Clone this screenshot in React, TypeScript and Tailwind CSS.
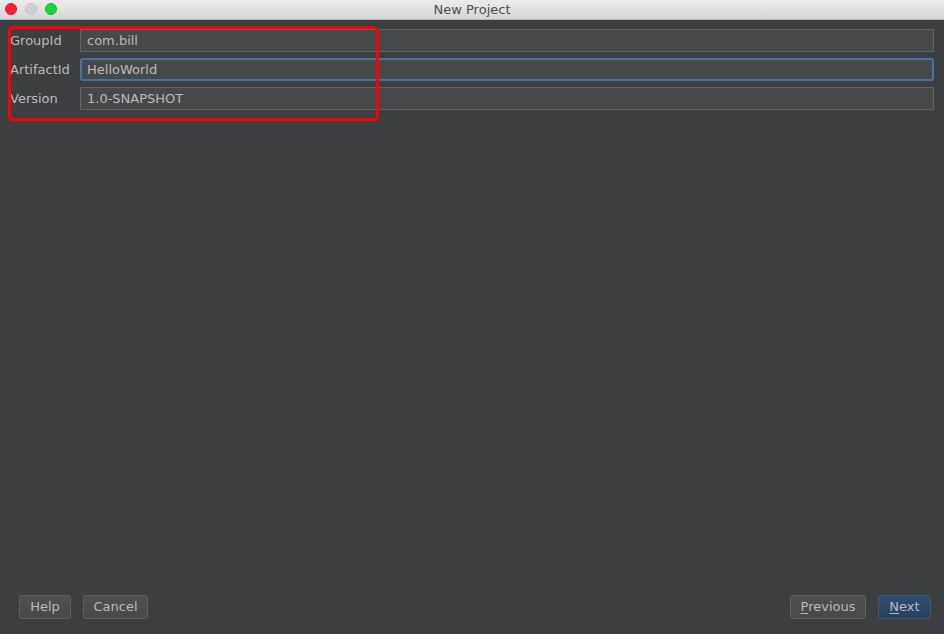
export default function App() {
  const fields = [
    { label: 'GroupId', value: 'com.bill', focused: false },
    { label: 'ArtifactId', value: 'HelloWorld', focused: true },
    { label: 'Version', value: '1.0-SNAPSHOT', focused: false },
  ]

  return (
    <div
      className="w-[944px] h-[634px] flex flex-col bg-[#3c3f41] text-[13px] text-[#bbbbbb] overflow-hidden"
      style={{ fontFamily: '"DejaVu Sans", "Liberation Sans", sans-serif' }}
    >
      {/* Title bar */}
      <div className="relative h-[20px] flex items-center justify-center bg-gradient-to-b from-[#ececec] to-[#d6d6d6] border-b border-[#b4b4b4]">
        <div className="absolute left-[5px] top-[3px] flex gap-[8px]">
          <span className="w-[12px] h-[12px] rounded-full bg-[#fc1e33] border border-[#e0162a]" />
          <span className="w-[12px] h-[12px] rounded-full bg-[#d0d0d0] border border-[#c2c2c2]" />
          <span className="w-[12px] h-[12px] rounded-full bg-[#1bd23c] border border-[#14b630]" />
        </div>
        <span className="text-[13px] text-[#4d4d4d] leading-none">New Project</span>
      </div>

      {/* Form */}
      <div className="relative flex flex-col gap-[6px] pt-[9px] pl-[10px] pr-[10px]">
        {fields.map((f) => (
          <div key={f.label} className="flex items-center h-[23px]">
            <span className="w-[70px] shrink-0 pt-[1px]">{f.label}</span>
            <div
              className={
                f.focused
                  ? 'flex-1 h-[23px] flex items-center px-[5px] pt-[1px] bg-[#45494a] border-2 border-[#4a729e] rounded-[3px]'
                  : 'flex-1 h-[23px] flex items-center px-[6px] pt-[1px] bg-[#45494a] border border-[#646464]'
              }
            >
              {f.value}
            </div>
          </div>
        ))}

        {/* Red annotation box */}
        <div className="absolute left-[8px] top-[6px] w-[371px] h-[95px] border-[3px] border-[#ff0000] rounded-[5px] pointer-events-none" />
      </div>

      <div className="flex-1" />

      {/* Buttons */}
      <div className="flex items-center justify-between pl-[19px] pr-[13px] pb-[15px]">
        <div className="flex gap-[12px]">
          <button className="w-[52px] h-[24px] rounded-[3px] border border-[#5e6162] bg-gradient-to-b from-[#4d5153] to-[#46494b] text-[#bbbbbb] text-[13px]">
            Help
          </button>
          <button className="w-[65px] h-[24px] rounded-[3px] border border-[#5e6162] bg-gradient-to-b from-[#4d5153] to-[#46494b] text-[#bbbbbb] text-[13px]">
            Cancel
          </button>
        </div>
        <div className="flex gap-[12px]">
          <button className="w-[76px] h-[24px] rounded-[3px] border border-[#5e6162] bg-gradient-to-b from-[#4d5153] to-[#46494b] text-[#bbbbbb] text-[13px]">
            <span className="underline underline-offset-2">P</span>revious
          </button>
          <button className="w-[53px] h-[24px] rounded-[3px] border border-[#4a5667] bg-gradient-to-b from-[#2f4d73] to-[#25405f] text-[#bbbbbb] text-[13px]">
            <span className="underline underline-offset-2">N</span>ext
          </button>
        </div>
      </div>
    </div>
  )
}
